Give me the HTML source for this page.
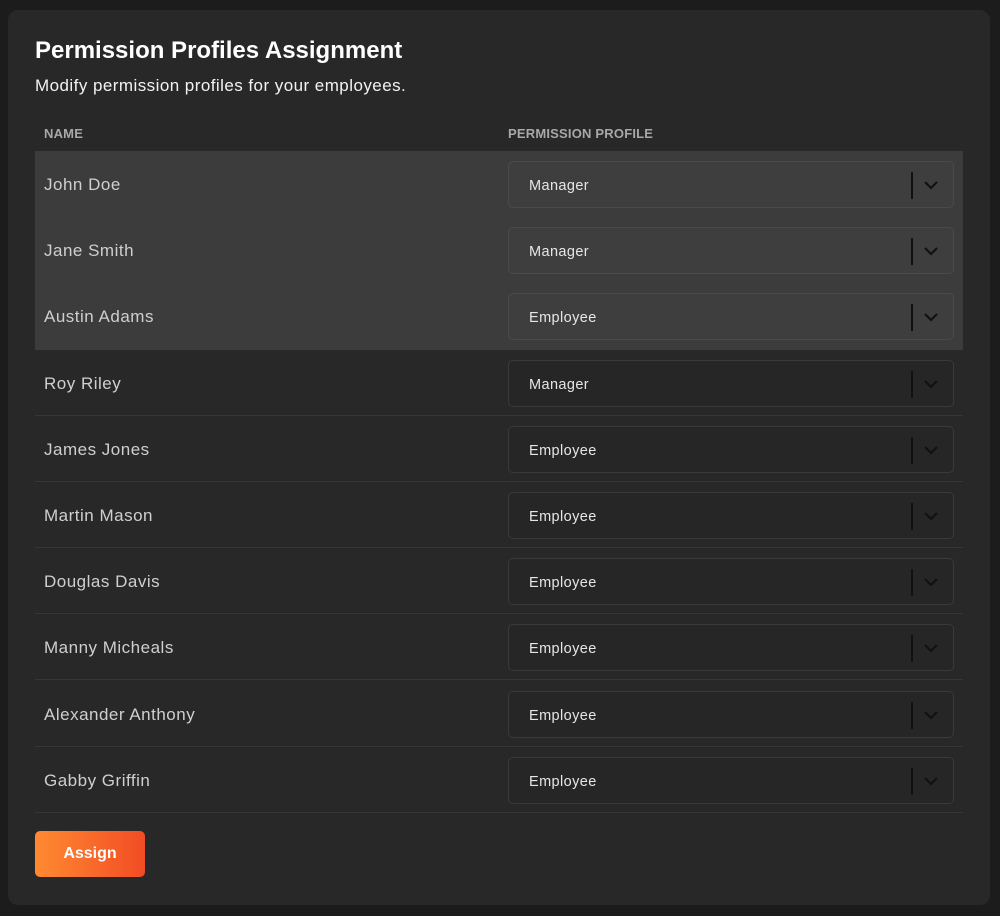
<!DOCTYPE html>
<html><head><meta charset="utf-8"><style>
*{box-sizing:border-box;margin:0;padding:0}
body{width:1000px;height:916px;background:#1c1c1c;font-family:"Liberation Sans",sans-serif;position:relative;overflow:hidden}
.card{position:absolute;left:8px;top:10px;width:982px;height:895px;background:#282828;border-radius:10px}
h1{position:absolute;left:35px;top:37px;font-size:24px;font-weight:bold;color:#fff;letter-spacing:0px}
.sub{position:absolute;left:35px;top:76px;font-size:17px;color:#f2f2f2;letter-spacing:0.45px}
.hd{position:absolute;top:126px;font-size:13px;font-weight:bold;color:#a8a8a8;letter-spacing:0.2px}
.row{position:absolute;left:35px;width:928px;height:66px;border-bottom:1px solid #363636}
.row.hl{background:#3c3c3c;border-bottom:none}
.nm{position:absolute;left:9px;top:24px;font-size:17px;color:#cfcfcf;letter-spacing:0.5px}
.sel{position:absolute;left:473px;top:10px;width:446px;height:47px;border:1px solid #3a3a3a;border-radius:5px;background:#262626}
.hl .sel{background:#3e3e3e;border-color:#4a4a4a}
.sel span{position:absolute;left:20px;top:16px;font-size:14.5px;color:#e6e6e6;letter-spacing:0.4px}
.sel i{position:absolute;left:402px;top:10px;width:2px;height:27px;background:#111}
.sel svg{position:absolute;left:414px;top:18px}
.btn{position:absolute;left:35px;top:831px;width:110px;height:46px;border-radius:5px;background:linear-gradient(90deg,#ff8a32,#f24c24);color:#fff;font-weight:bold;font-size:16px;text-align:center;line-height:46px}
</style></head><body>
<div class="card"></div>
<h1>Permission Profiles Assignment</h1>
<div class="sub">Modify permission profiles for your employees.</div>
<div class="hd" style="left:44px">NAME</div>
<div class="hd" style="left:508px">PERMISSION PROFILE</div>

<div class="row hl" style="top:151px"><div class="nm">John Doe</div><div class="sel"><span>Manager</span><i></i><svg width="16" height="10" viewBox="0 0 16 10"><path d="M2 2l6 6 6-6" stroke="#111" stroke-width="2.2" fill="none"/></svg></div></div>
<div class="row hl" style="top:217px"><div class="nm">Jane Smith</div><div class="sel"><span>Manager</span><i></i><svg width="16" height="10" viewBox="0 0 16 10"><path d="M2 2l6 6 6-6" stroke="#111" stroke-width="2.2" fill="none"/></svg></div></div>
<div class="row hl" style="top:283px;height:67px"><div class="nm">Austin Adams</div><div class="sel"><span>Employee</span><i></i><svg width="16" height="10" viewBox="0 0 16 10"><path d="M2 2l6 6 6-6" stroke="#111" stroke-width="2.2" fill="none"/></svg></div></div>
<div class="row" style="top:350px"><div class="nm">Roy Riley</div><div class="sel"><span>Manager</span><i></i><svg width="16" height="10" viewBox="0 0 16 10"><path d="M2 2l6 6 6-6" stroke="#111" stroke-width="2.2" fill="none"/></svg></div></div>
<div class="row" style="top:416px"><div class="nm">James Jones</div><div class="sel"><span>Employee</span><i></i><svg width="16" height="10" viewBox="0 0 16 10"><path d="M2 2l6 6 6-6" stroke="#111" stroke-width="2.2" fill="none"/></svg></div></div>
<div class="row" style="top:482px"><div class="nm">Martin Mason</div><div class="sel"><span>Employee</span><i></i><svg width="16" height="10" viewBox="0 0 16 10"><path d="M2 2l6 6 6-6" stroke="#111" stroke-width="2.2" fill="none"/></svg></div></div>
<div class="row" style="top:548px"><div class="nm">Douglas Davis</div><div class="sel"><span>Employee</span><i></i><svg width="16" height="10" viewBox="0 0 16 10"><path d="M2 2l6 6 6-6" stroke="#111" stroke-width="2.2" fill="none"/></svg></div></div>
<div class="row" style="top:614px"><div class="nm">Manny Micheals</div><div class="sel"><span>Employee</span><i></i><svg width="16" height="10" viewBox="0 0 16 10"><path d="M2 2l6 6 6-6" stroke="#111" stroke-width="2.2" fill="none"/></svg></div></div>
<div class="row" style="top:681px"><div class="nm">Alexander Anthony</div><div class="sel"><span>Employee</span><i></i><svg width="16" height="10" viewBox="0 0 16 10"><path d="M2 2l6 6 6-6" stroke="#111" stroke-width="2.2" fill="none"/></svg></div></div>
<div class="row" style="top:747px"><div class="nm">Gabby Griffin</div><div class="sel"><span>Employee</span><i></i><svg width="16" height="10" viewBox="0 0 16 10"><path d="M2 2l6 6 6-6" stroke="#111" stroke-width="2.2" fill="none"/></svg></div></div>

<div class="btn">Assign</div>
</body></html>
